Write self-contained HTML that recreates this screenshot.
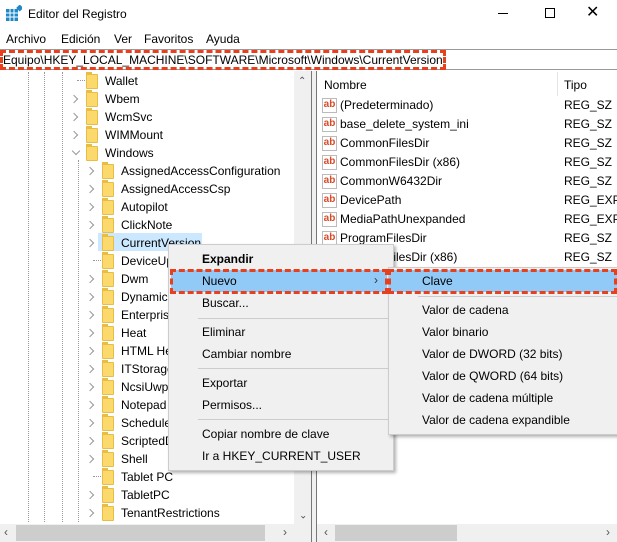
<!DOCTYPE html><html><head><style>
*{margin:0;padding:0;box-sizing:border-box}
body{width:617px;height:542px;overflow:hidden;background:#fff;font-family:"Liberation Sans",sans-serif;font-size:12px;color:#000;position:relative}
.a{position:absolute;white-space:nowrap}
.f{position:absolute;width:12px;height:15px;background:#fcd96d;border:1px solid #e8bd45;border-radius:1px}
.f:after{content:"";position:absolute;left:-1px;top:-3px;width:6px;height:3px;background:#e8bd45}
.ch{position:absolute;width:6px;height:6px;border-right:1px solid #999;border-bottom:1px solid #999;transform:rotate(-45deg)}
.ab{position:absolute;width:15px;height:15px;border:1px solid #bbb;background:#fff;color:#d84a2a;font-weight:bold;font-size:10px;line-height:11px;text-align:center}
.dash{position:absolute;border:3px dashed #e8401c}
.sep{position:absolute;height:1px;background:#ccc}
</style></head><body>
<svg class="a" style="left:6px;top:5px" width="16" height="16"><rect x="0" y="4" width="12" height="12" fill="#1e88c9"/><path d="M0 8H12M0 12H12M4 4V16M8 4V16" stroke="#fff" stroke-width="1"/><rect x="11" y="0" width="5" height="5" fill="#1e88c9" transform="rotate(45 13 3)"/></svg>
<div class="a" style="left:28px;top:7px;font-size:12px">Editor del Registro</div>
<div class="a" style="left:498px;top:13px;width:10px;height:1px;background:#000"></div>
<div class="a" style="left:545px;top:8px;width:10px;height:10px;border:1px solid #000"></div>
<div class="a" style="left:586px;top:2px;font-size:16px;font-weight:100">✕</div>
<div class="a" style="left:6px;top:32px">Archivo</div>
<div class="a" style="left:61px;top:32px">Edición</div>
<div class="a" style="left:114px;top:32px">Ver</div>
<div class="a" style="left:144px;top:32px">Favoritos</div>
<div class="a" style="left:206px;top:32px">Ayuda</div>
<div class="a" style="left:0;top:49px;width:617px;height:21px;border-top:1px solid #999;border-bottom:1px solid #999"></div>
<div class="a" style="left:3px;top:53px">Equipo\HKEY_LOCAL_MACHINE\SOFTWARE\Microsoft\Windows\CurrentVersion</div>
<div class="dash" style="left:0;top:50px;width:446px;height:20px"></div>
<div class="a" style="left:28px;top:72px;height:450px;border-left:1px dotted #999"></div>
<div class="a" style="left:44px;top:72px;height:450px;border-left:1px dotted #999"></div>
<div class="a" style="left:62px;top:72px;height:450px;border-left:1px dotted #999"></div>
<div class="a" style="left:78px;top:160px;height:362px;border-left:1px dotted #999"></div>
<div class="a" style="left:77px;top:80px;width:8px;border-top:1px dotted #999"></div>
<div class="a" style="left:93px;top:260px;width:8px;border-top:1px dotted #999"></div>
<div class="a" style="left:93px;top:476px;width:8px;border-top:1px dotted #999"></div>
<div class="a" style="left:98px;top:233px;width:104px;height:18px;background:#cce8ff"></div>
<div class="f" style="left:86px;top:74px"></div><div class="a" style="left:105px;top:74px">Wallet</div>
<div class="ch" style="left:71px;top:96px"></div><div class="f" style="left:86px;top:92px"></div><div class="a" style="left:105px;top:92px">Wbem</div>
<div class="ch" style="left:71px;top:114px"></div><div class="f" style="left:86px;top:110px"></div><div class="a" style="left:105px;top:110px">WcmSvc</div>
<div class="ch" style="left:71px;top:132px"></div><div class="f" style="left:86px;top:128px"></div><div class="a" style="left:105px;top:128px">WIMMount</div>
<div class="ch" style="left:73px;top:148px;transform:rotate(45deg)"></div><div class="f" style="left:86px;top:146px"></div><div class="a" style="left:105px;top:146px">Windows</div>
<div class="ch" style="left:87px;top:168px"></div><div class="f" style="left:102px;top:164px"></div><div class="a" style="left:121px;top:164px">AssignedAccessConfiguration</div>
<div class="ch" style="left:87px;top:186px"></div><div class="f" style="left:102px;top:182px"></div><div class="a" style="left:121px;top:182px">AssignedAccessCsp</div>
<div class="ch" style="left:87px;top:204px"></div><div class="f" style="left:102px;top:200px"></div><div class="a" style="left:121px;top:200px">Autopilot</div>
<div class="ch" style="left:87px;top:222px"></div><div class="f" style="left:102px;top:218px"></div><div class="a" style="left:121px;top:218px">ClickNote</div>
<div class="ch" style="left:87px;top:240px"></div><div class="f" style="left:102px;top:236px"></div><div class="a" style="left:121px;top:236px">CurrentVersion</div>
<div class="f" style="left:102px;top:254px"></div><div class="a" style="left:121px;top:254px">DeviceUp</div>
<div class="ch" style="left:87px;top:276px"></div><div class="f" style="left:102px;top:272px"></div><div class="a" style="left:121px;top:272px">Dwm</div>
<div class="ch" style="left:87px;top:294px"></div><div class="f" style="left:102px;top:290px"></div><div class="a" style="left:121px;top:290px">Dynamic</div>
<div class="ch" style="left:87px;top:312px"></div><div class="f" style="left:102px;top:308px"></div><div class="a" style="left:121px;top:308px">Enterpris</div>
<div class="ch" style="left:87px;top:330px"></div><div class="f" style="left:102px;top:326px"></div><div class="a" style="left:121px;top:326px">Heat</div>
<div class="ch" style="left:87px;top:348px"></div><div class="f" style="left:102px;top:344px"></div><div class="a" style="left:121px;top:344px">HTML He</div>
<div class="ch" style="left:87px;top:366px"></div><div class="f" style="left:102px;top:362px"></div><div class="a" style="left:121px;top:362px">ITStorage</div>
<div class="ch" style="left:87px;top:384px"></div><div class="f" style="left:102px;top:380px"></div><div class="a" style="left:121px;top:380px">NcsiUwp</div>
<div class="ch" style="left:87px;top:402px"></div><div class="f" style="left:102px;top:398px"></div><div class="a" style="left:121px;top:398px">Notepad</div>
<div class="ch" style="left:87px;top:420px"></div><div class="f" style="left:102px;top:416px"></div><div class="a" style="left:121px;top:416px">Schedule</div>
<div class="ch" style="left:87px;top:438px"></div><div class="f" style="left:102px;top:434px"></div><div class="a" style="left:121px;top:434px">ScriptedD</div>
<div class="ch" style="left:87px;top:456px"></div><div class="f" style="left:102px;top:452px"></div><div class="a" style="left:121px;top:452px">Shell</div>
<div class="f" style="left:102px;top:470px"></div><div class="a" style="left:121px;top:470px">Tablet PC</div>
<div class="ch" style="left:87px;top:492px"></div><div class="f" style="left:102px;top:488px"></div><div class="a" style="left:121px;top:488px">TabletPC</div>
<div class="ch" style="left:87px;top:510px"></div><div class="f" style="left:102px;top:506px"></div><div class="a" style="left:121px;top:506px">TenantRestrictions</div>
<!-- scrollbars -->
<div class="a" style="left:294px;top:71px;width:17px;height:471px;background:#f0f0f0"></div>
<div class="a" style="left:298px;top:76px;font-size:10px;color:#555">⌃</div>
<div class="a" style="left:299px;top:508px;font-size:10px;color:#555;transform:rotate(180deg)">⌃</div>
<div class="a" style="left:311px;top:71px;width:1px;height:471px;background:#777"></div>
<div class="a" style="left:316px;top:71px;width:1px;height:471px;background:#777"></div>
<div class="a" style="left:312px;top:71px;width:4px;height:471px;background:#f0f0f0"></div>
<div class="a" style="left:0;top:524px;width:294px;height:18px;background:#f0f0f0"></div>
<div class="a" style="left:16px;top:525px;width:249px;height:16px;background:#cdcdcd"></div>
<div class="a" style="left:4px;top:525px;color:#555">‹</div><div class="a" style="left:283px;top:525px;color:#555">›</div>
<div class="a" style="left:317px;top:524px;width:300px;height:18px;background:#f0f0f0"></div>
<div class="a" style="left:335px;top:525px;width:122px;height:16px;background:#cdcdcd"></div>
<div class="a" style="left:324px;top:525px;color:#555">‹</div><div class="a" style="left:606px;top:525px;color:#555">›</div>
<!-- right panel -->
<div class="a" style="left:324px;top:78px">Nombre</div>
<div class="a" style="left:557px;top:72px;width:1px;height:24px;background:#e5e5e5"></div>
<div class="a" style="left:564px;top:78px">Tipo</div>
<div class="ab" style="left:322px;top:98px">ab</div><div class="a" style="left:340px;top:98px">(Predeterminado)</div><div class="a" style="left:564px;top:98px">REG_SZ</div>
<div class="ab" style="left:322px;top:117px">ab</div><div class="a" style="left:340px;top:117px">base_delete_system_ini</div><div class="a" style="left:564px;top:117px">REG_SZ</div>
<div class="ab" style="left:322px;top:136px">ab</div><div class="a" style="left:340px;top:136px">CommonFilesDir</div><div class="a" style="left:564px;top:136px">REG_SZ</div>
<div class="ab" style="left:322px;top:155px">ab</div><div class="a" style="left:340px;top:155px">CommonFilesDir (x86)</div><div class="a" style="left:564px;top:155px">REG_SZ</div>
<div class="ab" style="left:322px;top:174px">ab</div><div class="a" style="left:340px;top:174px">CommonW6432Dir</div><div class="a" style="left:564px;top:174px">REG_SZ</div>
<div class="ab" style="left:322px;top:193px">ab</div><div class="a" style="left:340px;top:193px">DevicePath</div><div class="a" style="left:564px;top:193px">REG_EXPA</div>
<div class="ab" style="left:322px;top:212px">ab</div><div class="a" style="left:340px;top:212px">MediaPathUnexpanded</div><div class="a" style="left:564px;top:212px">REG_EXPA</div>
<div class="ab" style="left:322px;top:231px">ab</div><div class="a" style="left:340px;top:231px">ProgramFilesDir</div><div class="a" style="left:564px;top:231px">REG_SZ</div>
<div class="a" style="left:340px;top:250px">ProgramFilesDir (x86)</div><div class="a" style="left:564px;top:250px">REG_SZ</div>
<!-- context menu -->
<div class="a" style="left:168px;top:244px;width:226px;height:227px;background:#f0f0f0;border:1px solid #ccc;box-shadow:2px 2px 3px rgba(0,0,0,.3)"></div>
<div class="a" style="left:171px;top:270px;width:216px;height:22px;background:#91c9f7"></div>
<div class="a" style="left:202px;top:252px;font-weight:bold">Expandir</div>
<div class="a" style="left:202px;top:274px">Nuevo</div>
<div class="a" style="left:374px;top:273px;color:#333">›</div>
<div class="a" style="left:202px;top:296px">Buscar...</div>
<div class="sep" style="left:198px;top:318px;width:190px"></div>
<div class="a" style="left:202px;top:325px">Eliminar</div>
<div class="a" style="left:202px;top:347px">Cambiar nombre</div>
<div class="sep" style="left:198px;top:368px;width:190px"></div>
<div class="a" style="left:202px;top:376px">Exportar</div>
<div class="a" style="left:202px;top:398px">Permisos...</div>
<div class="sep" style="left:198px;top:419px;width:190px"></div>
<div class="a" style="left:202px;top:427px">Copiar nombre de clave</div>
<div class="a" style="left:202px;top:449px">Ir a HKEY_CURRENT_USER</div>
<!-- submenu -->
<div class="a" style="left:388px;top:267px;width:232px;height:168px;background:#f0f0f0;border:1px solid #ccc;box-shadow:2px 2px 3px rgba(0,0,0,.3)"></div>
<div class="a" style="left:389px;top:270px;width:228px;height:22px;background:#91c9f7"></div>
<div class="a" style="left:422px;top:274px">Clave</div>
<div class="sep" style="left:418px;top:296px;width:199px"></div>
<div class="a" style="left:422px;top:303px">Valor de cadena</div>
<div class="a" style="left:422px;top:325px">Valor binario</div>
<div class="a" style="left:422px;top:347px">Valor de DWORD (32 bits)</div>
<div class="a" style="left:422px;top:369px">Valor de QWORD (64 bits)</div>
<div class="a" style="left:422px;top:391px">Valor de cadena múltiple</div>
<div class="a" style="left:422px;top:413px">Valor de cadena expandible</div>
<div class="dash" style="left:170px;top:269px;width:218px;height:25px"></div>
<div class="dash" style="left:388px;top:269px;width:229px;height:25px"></div>
</body></html>
